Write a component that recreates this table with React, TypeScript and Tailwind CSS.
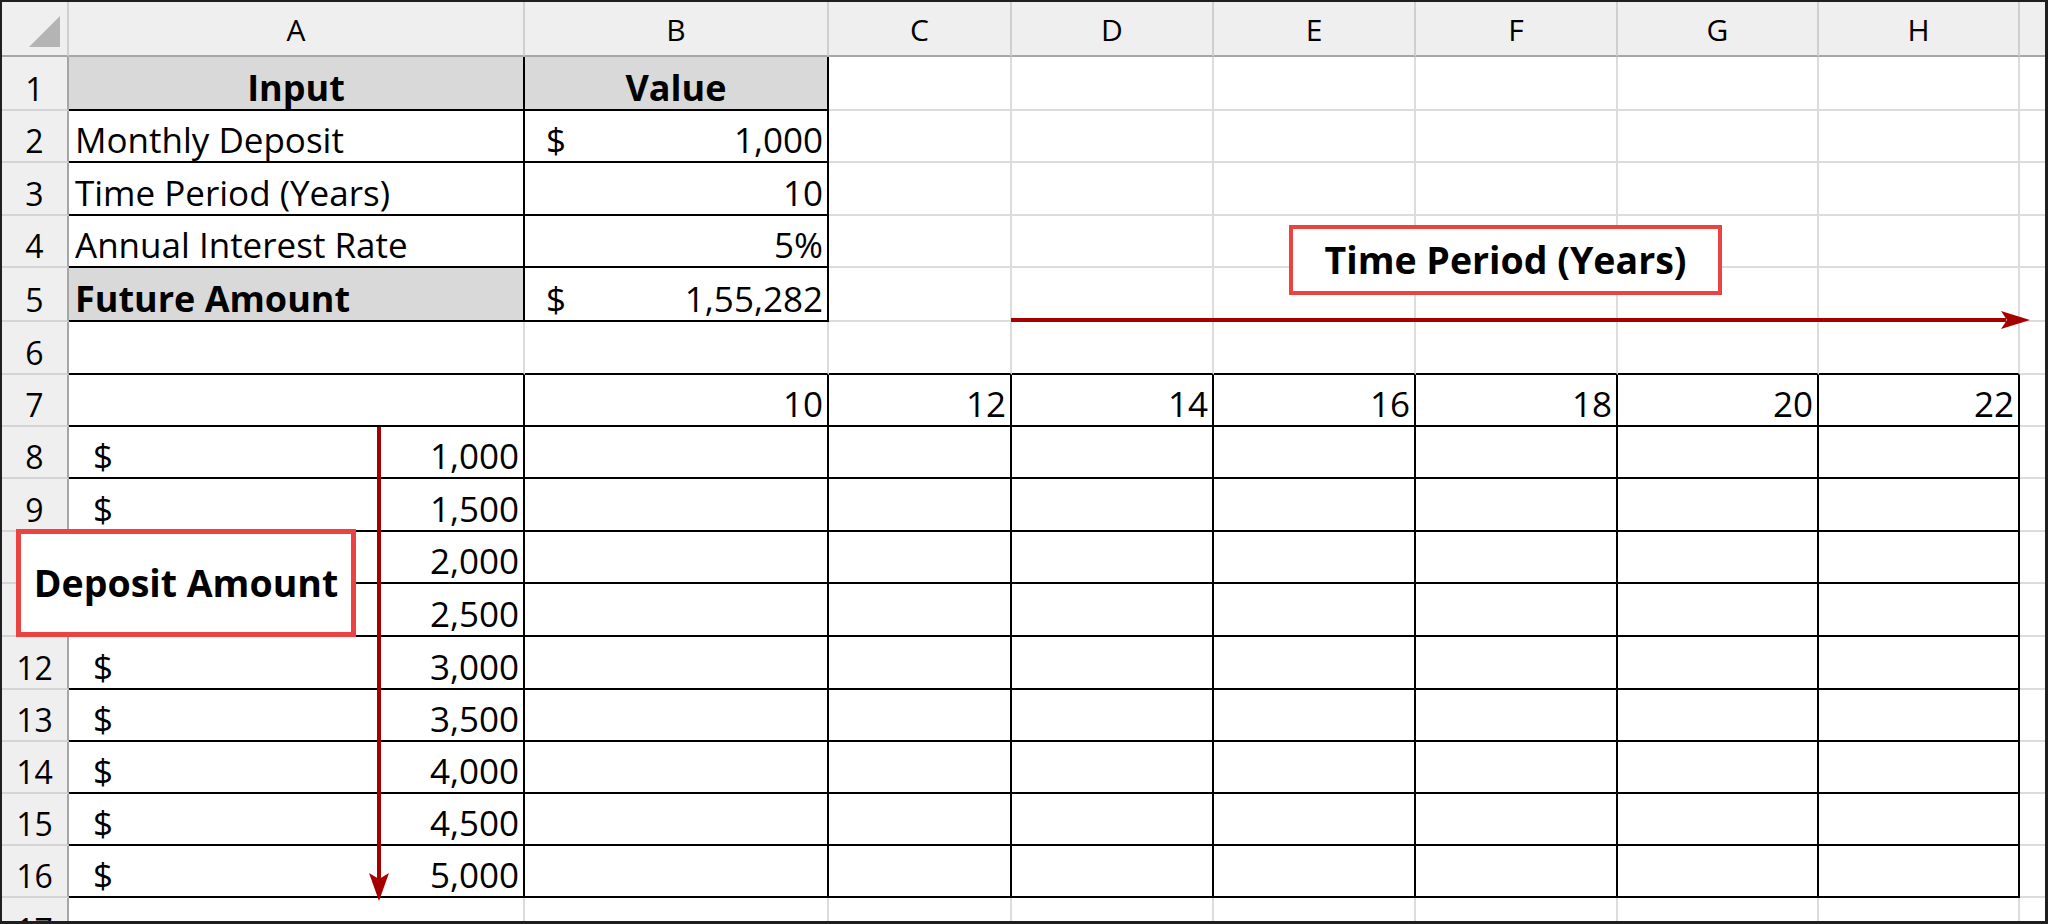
import React from "react";

type Cell = {
  text?: string;
  dollar?: boolean;
  align?: "left" | "right" | "center";
  bold?: boolean;
  fill?: boolean;
};

const COLS = ["A", "B", "C", "D", "E", "F", "G", "H", ""];
const ROWS = Array.from({ length: 17 }, (_, i) => i + 1);

const deposits = ["1,000", "1,500", "2,000", "2,500", "3,000", "3,500", "4,000", "4,500", "5,000"];
const years = ["10", "12", "14", "16", "18", "20", "22"];

// cell contents keyed by "row:col"
const cells: Record<string, Cell> = {
  "1:0": { text: "Input", bold: true, align: "center", fill: true },
  "1:1": { text: "Value", bold: true, align: "center", fill: true },
  "2:0": { text: "Monthly Deposit" },
  "2:1": { text: "1,000", dollar: true },
  "3:0": { text: "Time Period (Years)" },
  "3:1": { text: "10", align: "right" },
  "4:0": { text: "Annual Interest Rate" },
  "4:1": { text: "5%", align: "right" },
  "5:0": { text: "Future Amount", bold: true, fill: true },
  "5:1": { text: "1,55,282", dollar: true },
};
years.forEach((y, i) => {
  cells[`7:${i + 1}`] = { text: y, align: "right" };
});
deposits.forEach((d, i) => {
  cells[`${i + 8}:0`] = { text: d, dollar: true };
});

function borderClasses(r: number, c: number) {
  const t1 = r >= 1 && r <= 5 && c <= 1;
  const t2 = r >= 7 && r <= 16 && c <= 7;
  const rightBlack = t1 || t2;
  const bottomBlack = t1 || t2 || (r === 6 && c <= 7);
  const right = c === 8 ? "" : rightBlack ? "border-r-2 border-r-black" : "border-r-2 border-r-[#dcdcdc]";
  const bottom = r === 17 ? "" : bottomBlack ? "border-b-2 border-b-black" : "border-b-2 border-b-[#dcdcdc]";
  return `${right} ${bottom}`;
}

function SheetCell({ r, c }: { r: number; c: number }) {
  const cell = cells[`${r}:${c}`];
  const bg = cell?.fill ? "bg-[#d9d9d9]" : "bg-white";
  const font = cell?.bold ? "font-bold text-[36px]" : "font-normal text-[35px]";
  let inner: React.ReactNode = null;
  if (cell?.dollar) {
    inner = (
      <div className={`flex w-full items-end justify-between ${c === 0 ? "pl-[24px]" : "pl-[21px]"} pr-[4px]`}>
        <span>$</span>
        <span>{cell.text}</span>
      </div>
    );
  } else if (cell?.text) {
    const align =
      cell.align === "center" ? "justify-center" : cell.align === "right" ? "justify-end pr-[4px]" : "justify-start pl-[6px]";
    inner = (
      <div className={`flex w-full items-end ${align}`}>
        <span>{cell.text}</span>
      </div>
    );
  }
  return (
    <div className={`flex items-end whitespace-nowrap leading-[42px] ${bg} ${font} ${borderClasses(r, c)}`}>
      {inner}
    </div>
  );
}

export default function App() {
  return (
    <div className="w-[2048px] h-[924px] overflow-hidden bg-white border-t-2 border-l-2 border-r-[3px] border-b-[3px] border-[#1f1f1f] font-['Open_Sans',sans-serif] text-black">
      <div className="relative">
        <div className="grid grid-cols-[67px_456px_304px_183px_202px_202px_202px_201px_201px_25px] grid-rows-[55px_54px_52px_53px_52px_54px_53px_52px_52px_53px_52px_53px_53px_52px_52px_52px_52px_23px]">
          {/* column headers */}
          <div className="relative bg-[#efefef] border-r-2 border-r-[#cfcfcf] border-b-2 border-b-[#a6a6a6]">
            <svg className="absolute left-[27px] top-[14px]" width="31" height="31" viewBox="0 0 31 31">
              <polygon points="31,0 31,31 0,31" fill="#b4b4b4" />
            </svg>
          </div>
          {COLS.map((c, i) => (
            <div
              key={`h${i}`}
              className={`flex items-end justify-center pb-[3px] bg-[#efefef] text-[30px] leading-normal border-b-2 border-b-[#a6a6a6] ${i === 8 ? "" : "border-r-2 border-r-[#cfcfcf]"}`}
            >
              {c}
            </div>
          ))}

          {ROWS.map((r) => (
            <React.Fragment key={r}>
              <div
                className={`overflow-hidden bg-[#efefef] border-r-2 border-r-[#a6a6a6] ${r === 17 ? "" : "border-b-2 border-b-[#d4d4d4]"}`}
              >
                <div className={`flex justify-center items-end text-[32px] leading-[40px] ${r === 17 ? "h-[52px]" : "h-full"}`}>
                  {r}
                </div>
              </div>
              {COLS.map((_, c) => (
                <SheetCell key={c} r={r} c={c} />
              ))}
            </React.Fragment>
          ))}
        </div>

        {/* Time Period label + arrow */}
        <div className="absolute left-[1287px] top-[223px] w-[433px] h-[70px] border-4 border-[#eb4242] bg-white flex items-center justify-center text-[37.5px] font-bold whitespace-nowrap">
          Time Period (Years)
        </div>
        <svg className="absolute left-[1009px] top-[306px]" width="1020" height="24" viewBox="0 0 1020 24">
          <line x1="0" y1="12" x2="995" y2="12" stroke="#a50000" strokeWidth="4" />
          <polygon points="990,3 1019,12 990,21 996,12" fill="#a50000" />
        </svg>

        {/* Deposit Amount label + arrow */}
        <div className="absolute left-[14px] top-[527px] w-[340px] h-[108px] border-[5px] border-[#eb4242] bg-white flex items-center justify-center text-[37.5px] font-bold whitespace-nowrap">
          Deposit Amount
        </div>
        <svg className="absolute left-[365px] top-[425px]" width="24" height="475" viewBox="0 0 24 475">
          <line x1="12" y1="0" x2="12" y2="455" stroke="#a50000" strokeWidth="4" />
          <polygon points="2,446 12,474 22,446 12,452" fill="#a50000" />
        </svg>
      </div>
    </div>
  );
}
